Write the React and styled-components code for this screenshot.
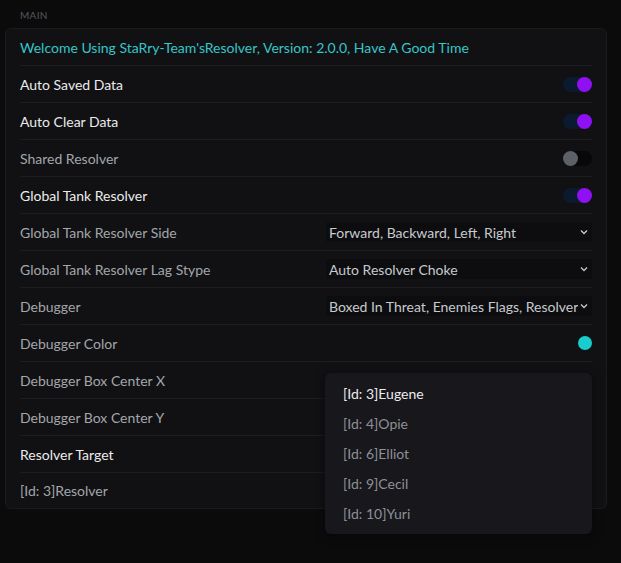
import React from "react";
import styled, { createGlobalStyle } from "styled-components";

const Global = createGlobalStyle`
  html, body { margin: 0; padding: 0; background: #0b0b0c; }
  body { font-family: Lato, "Open Sans", sans-serif; width: 621px; height: 563px; overflow: hidden; }
  * { box-sizing: border-box; }
`;

const Page = styled.div`
  position: relative;
  width: 621px;
  height: 563px;
  padding: 7px 14px 0 5px;
  background: #0b0b0c;
`;

const SectionTitle = styled.div`
  font-size: 10px;
  letter-spacing: 0.3px;
  color: #55575b;
  padding-left: 15px;
  height: 21px;
  line-height: 16px;
`;

const Card = styled.div`
  width: 602px;
  background: #111114;
  border: 1px solid #1b1b1f;
  border-radius: 6px;
  padding: 0 14px;
`;

const Row = styled.div`
  display: flex;
  align-items: center;
  justify-content: space-between;
  height: 37px;
  border-bottom: 1px solid #1d1d21;
  &:last-child { border-bottom: none; height: 35px; }
`;

const Label = styled.span`
  font-size: 14px;
  color: ${(p) => (p.$tone === "accent" ? "#36c6c8" : p.$tone === "bright" ? "#ebebeb" : "#a3a6aa")};
`;

const Track = styled.div`
  width: 29px;
  height: 15px;
  border-radius: 8px;
  background: ${(p) => (p.$on ? "#0b1a2f" : "#08080b")};
  display: flex;
  justify-content: ${(p) => (p.$on ? "flex-end" : "flex-start")};
  align-items: center;
`;

const Knob = styled.div`
  width: 15px;
  height: 15px;
  border-radius: 50%;
  background: ${(p) => (p.$on ? "#8f10f2" : "#5c6067")};
`;

const Select = styled.div`
  width: 266px;
  height: 20px;
  background: #0d0d10;
  border-radius: 3px;
  display: flex;
  align-items: center;
  padding: 0 4px 0 3px;
  gap: 2px;
`;

const SelectText = styled.span`
  flex: 1;
  min-width: 0;
  font-size: 14px;
  color: #c7cacd;
  white-space: nowrap;
  overflow: hidden;
`;

const Chevron = styled.svg`
  width: 8px;
  height: 6px;
  flex: none;
`;

const ColorDot = styled.div`
  width: 14px;
  height: 14px;
  border-radius: 50%;
  background: #18cdcd;
`;

const Popup = styled.div`
  position: absolute;
  left: 325px;
  top: 373px;
  width: 267px;
  height: 161px;
  background: #17171c;
  border-radius: 6px;
  padding: 6px 0 0 18px;
  box-shadow: 0 2px 10px rgba(0, 0, 0, 0.5);
`;

const Option = styled.div`
  height: 30px;
  line-height: 30px;
  font-size: 14px;
  color: ${(p) => (p.$active ? "#ececec" : "#8d9095")};
`;

const Toggle = ({ on }) => (
  <Track $on={on}>
    <Knob $on={on} />
  </Track>
);

const Dropdown = ({ value }) => (
  <Select>
    <SelectText>{value}</SelectText>
    <Chevron viewBox="0 0 8 6">
      <path d="M1 1.5 L4 4.5 L7 1.5" fill="none" stroke="#c7cacd" strokeWidth="1.3" />
    </Chevron>
  </Select>
);

export default function App() {
  return (
    <>
      <Global />
      <Page>
        <SectionTitle>MAIN</SectionTitle>
        <Card>
          <Row>
            <Label $tone="accent">Welcome Using StaRry-Team'sResolver, Version: 2.0.0, Have A Good Time</Label>
          </Row>
          <Row>
            <Label $tone="bright">Auto Saved Data</Label>
            <Toggle on />
          </Row>
          <Row>
            <Label $tone="bright">Auto Clear Data</Label>
            <Toggle on />
          </Row>
          <Row>
            <Label>Shared Resolver</Label>
            <Toggle on={false} />
          </Row>
          <Row>
            <Label $tone="bright">Global Tank Resolver</Label>
            <Toggle on />
          </Row>
          <Row>
            <Label>Global Tank Resolver Side</Label>
            <Dropdown value="Forward, Backward, Left, Right" />
          </Row>
          <Row>
            <Label>Global Tank Resolver Lag Stype</Label>
            <Dropdown value="Auto Resolver Choke" />
          </Row>
          <Row>
            <Label>Debugger</Label>
            <Dropdown value="Boxed In Threat, Enemies Flags, Resolver Info" />
          </Row>
          <Row>
            <Label>Debugger Color</Label>
            <ColorDot />
          </Row>
          <Row>
            <Label>Debugger Box Center X</Label>
          </Row>
          <Row>
            <Label>Debugger Box Center Y</Label>
          </Row>
          <Row>
            <Label $tone="bright">Resolver Target</Label>
          </Row>
          <Row>
            <Label>[Id: 3]Resolver</Label>
          </Row>
        </Card>
        <Popup>
          <Option $active>[Id: 3]Eugene</Option>
          <Option>[Id: 4]Opie</Option>
          <Option>[Id: 6]Elliot</Option>
          <Option>[Id: 9]Cecil</Option>
          <Option>[Id: 10]Yuri</Option>
        </Popup>
      </Page>
    </>
  );
}
